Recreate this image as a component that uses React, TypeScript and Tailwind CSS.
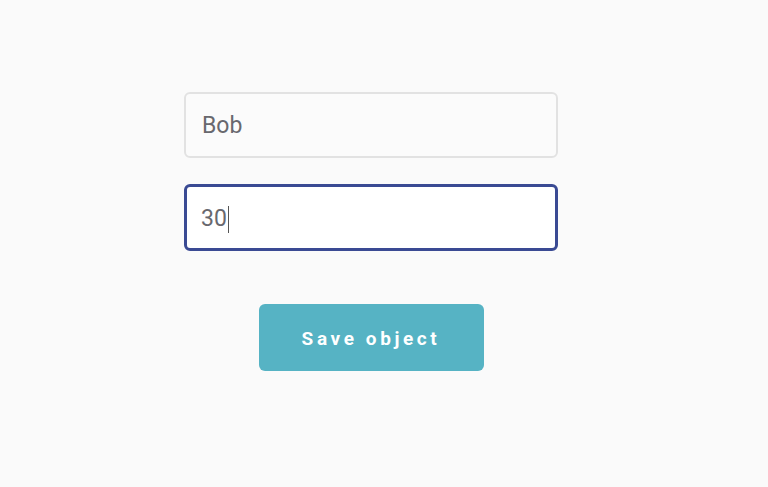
import React from 'react';

const font = { fontFamily: 'Roboto, "Noto Sans", sans-serif' };

export default function App() {
  return (
    <div className="min-h-screen bg-[#fafafa] pl-[184px] pt-[92px]" style={font}>
      <div className="flex w-[374px] flex-col">
        {/* Name field */}
        <div className="flex h-[66px] items-center rounded-md border-2 border-[#e2e2e2] bg-[#fbfbfb] px-4 pt-[3px]">
          <span className="text-[23px] text-[#68686e]">Bob</span>
        </div>

        {/* Age field (focused) */}
        <div className="mt-[26px] flex h-[67px] items-center rounded-md border-[3px] border-[#3a4a93] bg-white px-[14px] pt-[3px]">
          <span className="text-[23px] text-[#68686e]">30</span>
          <span className="ml-[1px] h-[27px] w-px bg-[#555]" />
        </div>

        {/* Save */}
        <button className="mx-auto mt-[53px] flex h-[67px] w-[225px] items-center justify-center rounded-md bg-[#56b3c4] pt-[3px] text-[19px] font-bold tracking-[3.6px] text-white">
          Save object
        </button>
      </div>
    </div>
  );
}
